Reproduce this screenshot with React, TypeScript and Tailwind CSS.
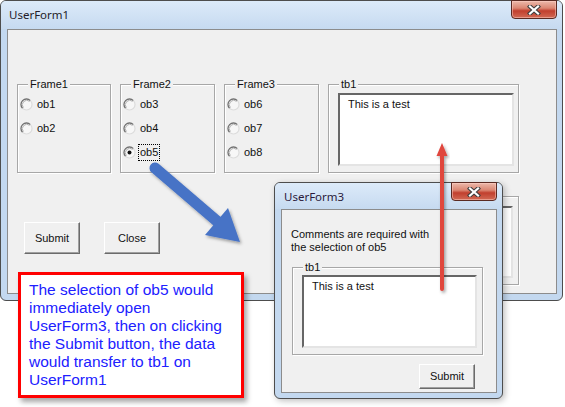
import React from "react";

const ui = { fontFamily: '"Liberation Sans", Arial, sans-serif' };
const titleFont = { fontFamily: '"Noto Sans", "Liberation Sans", sans-serif' };

function CloseButton() {
  return (
    <div className="-mt-[1px] flex h-[19px] w-[46px] items-center justify-center rounded-b-[4px] border border-[#5a2a22] bg-[linear-gradient(to_bottom,#ecb9ab_0%,#db8672_42%,#c13f2e_58%,#d26a55_100%)] shadow-[inset_0_0_0_1px_rgba(255,210,200,0.5)]">
      <svg width="14" height="10" viewBox="0 0 14 10">
        <path d="M3 1.5 L11 8.5 M11 1.5 L3 8.5" stroke="#3d3d3d" strokeWidth="4.2" strokeLinecap="square" />
        <path d="M3 1.5 L11 8.5 M11 1.5 L3 8.5" stroke="#ffffff" strokeWidth="2.2" strokeLinecap="square" />
      </svg>
    </div>
  );
}

function Radio({ checked }: { checked?: boolean }) {
  return (
    <svg width="13" height="13" viewBox="0 0 13 13" className="shrink-0">
      <circle cx="6.5" cy="6.5" r="5.5" fill="#f7f7f7" />
      <path d="M2.6 10.4 A5.5 5.5 0 0 1 10.4 2.6" fill="none" stroke="#6f6f6f" strokeWidth="1.3" />
      <path d="M10.4 2.6 A5.5 5.5 0 0 1 2.6 10.4" fill="none" stroke="#dcdcdc" strokeWidth="1.2" />
      <path d="M3.4 9.6 A4.4 4.4 0 0 1 9.6 3.4" fill="none" stroke="#a9a9a9" strokeWidth="0.9" />
      {checked && <circle cx="6.5" cy="6.5" r="2" fill="#111" />}
    </svg>
  );
}

function Frame({
  legend,
  className,
  children,
}: {
  legend?: string;
  className: string;
  children?: React.ReactNode;
}) {
  return (
    <div
      className={
        "relative shrink-0 border border-[#a7a7a7] shadow-[inset_1px_1px_0_#ffffff,1px_1px_0_#ffffff] " +
        className
      }
    >
      {legend && (
        <span className="absolute -top-[7px] left-[10px] bg-[#f0f0f0] px-[2px] text-[11px] leading-[13px] text-[#111]">
          {legend}
        </span>
      )}
      {children}
    </div>
  );
}

function TextBox({ text, className }: { text?: string; className: string }) {
  return (
    <div
      className={
        "border-2 border-t-[#666666] border-l-[#666666] border-b-[#e4e4e4] border-r-[#e4e4e4] bg-white pl-[8px] pt-[3px] text-[11px] leading-[13px] text-[#111] " +
        className
      }
    >
      {text}
    </div>
  );
}

function Button({ label, className }: { label: string; className: string }) {
  return (
    <div
      className={
        "flex items-center justify-center border border-t-white border-l-white border-r-[#6b6b6b] border-b-[#6b6b6b] bg-[#f0f0f0] text-[11px] text-[#111] shadow-[inset_-1px_-1px_0_#a0a0a0] " +
        className
      }
    >
      {label}
    </div>
  );
}

function RadioRow({ label, checked, focused }: { label: string; checked?: boolean; focused?: boolean }) {
  return (
    <div className="flex h-[24px] items-center gap-[2px] pl-[2px] text-[11px] text-[#111]">
      <Radio checked={checked} />
      <span className={focused ? "border border-dotted border-black px-[1px] leading-[15px]" : "px-[2px]"}>
        {label}
      </span>
    </div>
  );
}

function OptionFrame({ legend, items, width }: { legend: string; items: string[]; width: string }) {
  return (
    <Frame legend={legend} className={width + " h-[89px]"}>
      <div className="flex flex-col pt-[7px]">
        {items.map((item) => (
          <RadioRow key={item} label={item} checked={item === "ob5"} focused={item === "ob5"} />
        ))}
      </div>
    </Frame>
  );
}

export default function App() {
  return (
    <div className="relative h-[407px] w-[565px] overflow-hidden bg-white" style={ui}>
      {/* UserForm1 */}
      <div className="flex h-[301px] w-[563px] flex-col rounded-[6px] border border-[#4d4d4d] bg-[#c3d8ef] px-[6px] pr-[5px] pb-[6px]">
        <div className="flex h-[28px] shrink-0 items-start justify-between bg-[linear-gradient(to_bottom,#dceaf9,#c6daf0)] -mx-[6px] -mr-[5px] pl-[8px] rounded-t-[5px]">
          <span className="mt-[6px] text-[11.5px] leading-[16px] text-[#241c28]" style={titleFont}>
            UserForm1
          </span>
          <div className="mr-[5px]">
            <CloseButton />
          </div>
        </div>
        <div className="flex-1 border border-[#8c8c8c] bg-[#f0f0f0] pl-[9px] pt-[54px]">
          <div className="flex gap-[9px]">
            <OptionFrame legend="Frame1" items={["ob1", "ob2"]} width="w-[94px]" />
            <OptionFrame legend="Frame2" items={["ob3", "ob4", "ob5"]} width="w-[95px]" />
            <OptionFrame legend="Frame3" items={["ob6", "ob7", "ob8"]} width="w-[95px]" />
            <Frame legend="tb1" className="w-[191px] h-[89px]">
              <TextBox text="This is a test" className="ml-[9px] mt-[8px] h-[73px] w-[176px]" />
            </Frame>
          </div>
          <div className="mt-[23px] flex">
            <div className="flex w-[311px] gap-[24px] pl-[7px] pt-[26px]">
              <Button label="Submit" className="h-[32px] w-[56px]" />
              <Button label="Close" className="h-[32px] w-[56px]" />
            </div>
            <Frame className="w-[191px] h-[89px]">
              <TextBox className="ml-[9px] mt-[9px] h-[72px] w-[175px]" />
            </Frame>
          </div>
        </div>
      </div>

      {/* Callout */}
      <div className="absolute left-[18px] top-[272px] h-[126px] w-[226px] border-[3px] border-[#ff0000] bg-white pl-[8px] pt-[6px] text-[15.5px] leading-[18px] text-[#2020ff] shadow-[3px_4px_5px_rgba(0,0,0,0.35)]">
        The selection of ob5 would
        <br />
        immediately open
        <br />
        UserForm3, then on clicking
        <br />
        the Submit button, the data
        <br />
        would transfer to tb1 on
        <br />
        UserForm1
      </div>

      {/* UserForm3 */}
      <div className="absolute left-[274px] top-[182px] flex h-[217px] w-[229px] flex-col rounded-[6px] border border-[#4d4d4d] bg-[#c3d8ef] px-[6px] pr-[5px] pb-[5px] shadow-[2px_2px_6px_rgba(0,0,0,0.25)]">
        <div className="flex h-[26px] shrink-0 items-start justify-between bg-[linear-gradient(to_bottom,#dceaf9,#c6daf0)] -mx-[6px] -mr-[5px] pl-[9px] rounded-t-[5px]">
          <span className="mt-[6px] text-[11.5px] leading-[16px] text-[#2a1a3a]" style={titleFont}>
            UserForm3
          </span>
          <div className="mr-[5px]">
            <CloseButton />
          </div>
        </div>
        <div className="flex flex-1 flex-col border border-[#8c8c8c] bg-[#f0f0f0] pl-[9px] pt-[18px]">
          <div className="text-[11px] leading-[13px] text-[#111]">
            Comments are required with
            <br />
            the selection of ob5
          </div>
          <Frame legend="tb1" className="ml-[1px] mt-[13px] h-[88px] w-[191px]">
            <TextBox text="This is a test" className="ml-[9px] mt-[7px] h-[73px] w-[175px]" />
          </Frame>
          <Button label="Submit" className="ml-[128px] mt-[9px] h-[25px] w-[56px]" />
        </div>
      </div>

      {/* Arrows */}
      <svg className="pointer-events-none absolute left-0 top-0" width="565" height="407" viewBox="0 0 565 407">
        <defs>
          <filter id="sh" x="-20%" y="-20%" width="140%" height="140%">
            <feDropShadow dx="1.5" dy="2" stdDeviation="1.6" floodColor="#000" floodOpacity="0.35" />
          </filter>
        </defs>
        <g filter="url(#sh)">
          <line x1="155" y1="168" x2="218" y2="222" stroke="#4673c6" strokeWidth="11" strokeLinecap="round" />
          <polygon points="205,235 240,242 228,208" fill="#4673c6" />
        </g>
        <g filter="url(#sh)">
          <line x1="442" y1="289" x2="442" y2="154" stroke="#e0463d" strokeWidth="4" strokeLinecap="round" />
          <polygon points="436.5,156 442,143 447.5,156" fill="#e0463d" />
        </g>
      </svg>
    </div>
  );
}
